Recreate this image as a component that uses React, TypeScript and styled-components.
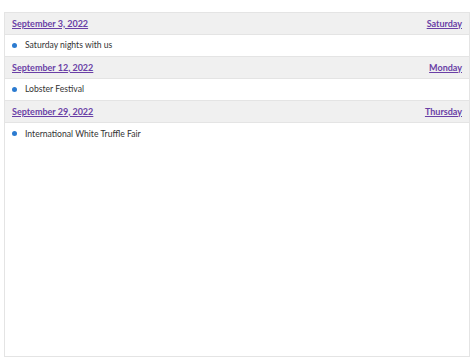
import React from "react";
import styled, { createGlobalStyle } from "styled-components";

interface AgendaDay {
  date: string;
  weekday: string;
  events: string[];
}

const days: AgendaDay[] = [
  { date: "September 3, 2022", weekday: "Saturday", events: ["Saturday nights with us"] },
  { date: "September 12, 2022", weekday: "Monday", events: ["Lobster Festival"] },
  { date: "September 29, 2022", weekday: "Thursday", events: ["International White Truffle Fair"] },
];

const GlobalStyle = createGlobalStyle`
  html, body {
    margin: 0;
    padding: 0;
    background: #ffffff;
  }
  body {
    font-family: Lato, "Open Sans", sans-serif;
  }
`;

const Page = styled.div`
  padding: 12px 4px 4px 4px;
  box-sizing: border-box;
  height: 361px;
`;

const Agenda = styled.div`
  height: 100%;
  box-sizing: border-box;
  border: 1px solid #e4e4e4;
  display: flex;
  flex-direction: column;
`;

const DayHeader = styled.div`
  display: flex;
  justify-content: space-between;
  align-items: center;
  height: 22px;
  box-sizing: border-box;
  padding: 0 7px 1px 7px;
  background: #f0f0f0;
  border-bottom: 1px solid #e4e4e4;
`;

const DayLink = styled.a`
  color: #6a3fa6;
  font-size: 9px;
  font-weight: 700;
  text-decoration: underline;
  cursor: pointer;
`;

const EventRow = styled.div`
  display: flex;
  align-items: center;
  height: 22px;
  box-sizing: border-box;
  padding: 0 7px 1px 7px;
  font-size: 8.6px;
  color: #333333;
  border-bottom: 1px solid #e4e4e4;
  &:last-child {
    border-bottom: none;
  }
`;

const Bullet = styled.span`
  width: 5px;
  height: 5px;
  border-radius: 50%;
  background: #2b7bd0;
  margin-right: 8px;
  flex-shrink: 0;
`;

const App: React.FC = () => {
  return (
    <>
      <GlobalStyle />
      <Page>
        <Agenda>
          {days.map((day) => (
            <React.Fragment key={day.date}>
              <DayHeader>
                <DayLink>{day.date}</DayLink>
                <DayLink>{day.weekday}</DayLink>
              </DayHeader>
              {day.events.map((ev) => (
                <EventRow key={ev}>
                  <Bullet />
                  {ev}
                </EventRow>
              ))}
            </React.Fragment>
          ))}
        </Agenda>
      </Page>
    </>
  );
};

export default App;
